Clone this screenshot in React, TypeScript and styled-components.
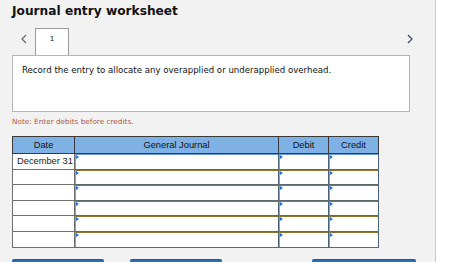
import styled, { createGlobalStyle } from 'styled-components';

const GlobalStyle = createGlobalStyle`
  html, body {
    margin: 0;
    padding: 0;
    background: #ffffff;
  }
  body {
    font-family: "DejaVu Sans", Verdana, sans-serif;
    overflow: hidden;
  }
`;

const Page = styled.div`
  display: flex;
  height: 262px;
`;

const Panel = styled.div`
  width: 436px;
  height: 262px;
  background: #f2f2f2;
  border-right: 1px solid #c6c6c6;
  box-sizing: border-box;
  padding: 0 0 0 12px;
  overflow: hidden;
`;

const Title = styled.h1`
  margin: 0;
  padding-top: 4px;
  height: 28px;
  box-sizing: border-box;
  font-family: "DejaVu Sans", Verdana, sans-serif;
  font-size: 12.2px;
  font-weight: bold;
  color: #111;
`;

const TabRow = styled.div`
  display: flex;
  align-items: stretch;
  height: 27px;
  width: 402px;
`;

const Chevron = styled.div<{ $w: number }>`
  display: flex;
  align-items: center;
  justify-content: center;
  width: ${(p) => p.$w}px;
  padding-bottom: 6px;
`;

const Tab = styled.div`
  width: 34px;
  background: #fff;
  border: 1px solid #9a9a9a;
  border-bottom: none;
  box-sizing: border-box;
  display: flex;
  justify-content: center;
  padding-top: 5px;
  font-family: "Liberation Sans", Arial, sans-serif;
  font-size: 8px;
  color: #222;
`;

const Spacer = styled.div`
  flex: 1;
`;

const PromptBox = styled.div`
  width: 398px;
  height: 57px;
  box-sizing: border-box;
  background: #fff;
  border: 1px solid #b5b5b5;
  padding: 9px 0 0 9px;
  font-family: "DejaVu Sans", Tahoma, sans-serif;
  font-size: 8.6px;
  color: #111;
  white-space: nowrap;
`;

const Note = styled.div`
  padding-top: 5px;
  height: 24px;
  box-sizing: border-box;
  font-family: "DejaVu Sans", Tahoma, sans-serif;
  font-size: 7.3px;
  color: #b05a3c;
`;

const Table = styled.table`
  border-collapse: collapse;
  width: 366px;
  table-layout: fixed;
  font-family: "Liberation Sans", Arial, sans-serif;
  font-size: 9.3px;
  color: #111;
`;

const Th = styled.th<{ $w: number }>`
  width: ${(p) => p.$w}px;
  height: 16px;
  padding: 0;
  background: #7fb1e5;
  border: 1px solid #3a3a3a;
  font-weight: normal;
  text-align: center;
`;

const DateCell = styled.td`
  height: 14.6px;
  padding: 0 0 0 4px;
  background: #fff;
  border: 1px solid #707070;
  white-space: nowrap;
  color: #222;
`;

const InputCell = styled.td<{ $first?: boolean }>`
  padding: 0;
  border-left: 1px solid #4f5f74;
  border-right: 1px solid #4f5f74;
  border-top: 1px solid ${(p) => (p.$first ? '#2a2a2a' : '#7b6423')};
  border-bottom: 1px solid #5d6a72;
`;

const InputBox = styled.div<{ $first?: boolean }>`
  height: 13.6px;
  background: #fff;
  border-top: 1px solid ${(p) => (p.$first ? '#6d9ad2' : '#8c7430')};
  border-left: 1px solid #7aa3d8;
  position: relative;
`;

const Marker = styled.span`
  position: absolute;
  left: 0;
  top: 0;
  width: 0;
  height: 0;
  border-top: 2px solid transparent;
  border-bottom: 2px solid transparent;
  border-left: 3px solid #1f6fd1;
`;

const ButtonRow = styled.div`
  display: flex;
  margin-top: 11px;
`;

const BlueButton = styled.div<{ $w: number; $gap: number }>`
  width: ${(p) => p.$w}px;
  margin-left: ${(p) => p.$gap}px;
  height: 20px;
  background: #2f6db3;
  border-top: 1px solid #1c5aa0;
  border-radius: 2px 2px 0 0;
`;

const rows = ['December 31', '', '', '', '', ''];

function Input({ first }: { first: boolean }) {
  return (
    <InputBox $first={first}>
      <Marker />
    </InputBox>
  );
}

export default function App() {
  return (
    <Page>
      <GlobalStyle />
      <Panel>
        <Title>Journal entry worksheet</Title>
        <TabRow>
          <Chevron $w={23}>
            <svg width="6" height="10" viewBox="0 0 6 10">
              <polyline points="5,1 1,5 5,9" fill="none" stroke="#6b6b6b" strokeWidth="1.3" />
            </svg>
          </Chevron>
          <Tab>1</Tab>
          <Spacer />
          <Chevron $w={8}>
            <svg width="6" height="10" viewBox="0 0 6 10">
              <polyline points="1,1 5,5 1,9" fill="none" stroke="#3f4d66" strokeWidth="1.3" />
            </svg>
          </Chevron>
        </TabRow>
        <PromptBox>
          Record the entry to allocate any overapplied or underapplied overhead.
        </PromptBox>
        <Note>Note: Enter debits before credits.</Note>
        <Table>
          <thead>
            <tr>
              <Th $w={61}>Date</Th>
              <Th $w={203}>General Journal</Th>
              <Th $w={49}>Debit</Th>
              <Th $w={49}>Credit</Th>
            </tr>
          </thead>
          <tbody>
            {rows.map((d, i) => {
              const first = i === 0;
              return (
                <tr key={i}>
                  <DateCell>{d}</DateCell>
                  <InputCell $first={first}>
                    <Input first={first} />
                  </InputCell>
                  <InputCell $first={first}>
                    <Input first={first} />
                  </InputCell>
                  <InputCell $first={first}>
                    <Input first={first} />
                  </InputCell>
                </tr>
              );
            })}
          </tbody>
        </Table>
        <ButtonRow>
          <BlueButton $w={92} $gap={0} />
          <BlueButton $w={92} $gap={26} />
          <BlueButton $w={104} $gap={90} />
        </ButtonRow>
      </Panel>
    </Page>
  );
}
